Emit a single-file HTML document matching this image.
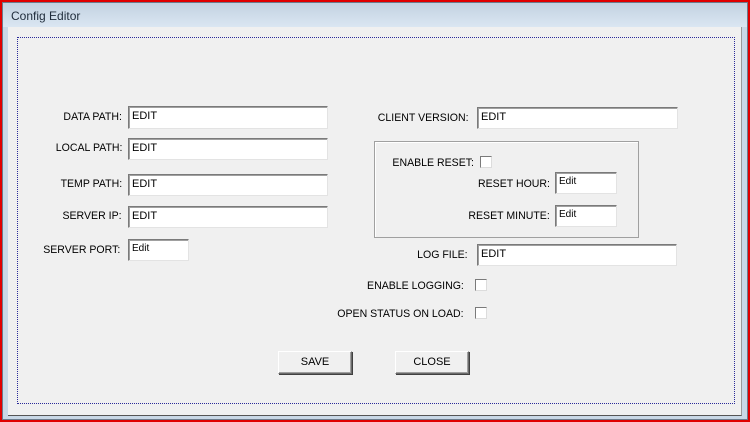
<!DOCTYPE html>
<html><head><meta charset="utf-8"><style>
*{margin:0;padding:0;box-sizing:border-box}
body{width:750px;height:422px;overflow:hidden;background:#e00000;font-family:"Liberation Sans",sans-serif;position:relative}
#win{position:absolute;left:2px;top:2px;width:746px;height:418px;background:#c9d8e6;border:1px solid #6b7b8c}
#title{position:absolute;left:3px;top:3px;width:744px;height:24px;background:linear-gradient(#c2d2e1,#dae6f2)}
#title span{position:absolute;left:8px;top:6px;font-size:12px;color:#1e2b3a}
#client{position:absolute;left:8px;top:27px;width:734px;height:389px;background:#f0f0f0;border-bottom:1px solid #555;border-right:1px solid #999}
#dots{position:absolute;left:17px;top:37px;width:718px;height:367px;border:1px dotted #2a2a9a}
.l{position:absolute;font-size:11px;color:#000;text-align:right;white-space:nowrap;transform-origin:right center;transform:scaleX(0.96)}
.e{position:absolute;background:#fff;border-top:1px solid #7a7a7a;border-left:1px solid #7a7a7a;border-right:1px solid #e3e3e3;border-bottom:1px solid #e3e3e3;box-shadow:inset 1px 1px 0 #a0a0a0;font-size:11px;padding:3px 0 0 3px;line-height:12px}
.c{position:absolute;width:12px;height:12px;background:#fff;border-top:1px solid #7a7a7a;border-left:1px solid #7a7a7a;border-right:1px solid #dcdcdc;border-bottom:1px solid #dcdcdc}
.b{position:absolute;height:23px;background:#f0f0f0;border:1px solid #6a6a6a;border-top-color:#fff;border-left-color:#fff;box-shadow:1px 1px 0 #404040,inset -1px -1px 0 #a0a0a0;font-size:11px;text-align:center;line-height:21px}
#grp{position:absolute;left:374px;top:141px;width:265px;height:97px;border:1px solid #a0a0a0;box-shadow:inset 1px 1px 0 #fff}
</style></head><body>
<div id="win"></div>
<div id="title"><span>Config Editor</span></div>
<div id="client"></div>
<div id="dots"></div>

<div class="l" style="right:628px;top:111px">DATA PATH:</div>
<div class="e" style="left:128px;top:106px;width:200px;height:23px">EDIT</div>
<div class="l" style="right:628px;top:142px">LOCAL PATH:</div>
<div class="e" style="left:128px;top:138px;width:200px;height:22px">EDIT</div>
<div class="l" style="right:628px;top:178px">TEMP PATH:</div>
<div class="e" style="left:128px;top:174px;width:200px;height:22px">EDIT</div>
<div class="l" style="right:628px;top:210px">SERVER IP:</div>
<div class="e" style="left:128px;top:206px;width:200px;height:22px">EDIT</div>
<div class="l" style="right:630px;top:244px">SERVER PORT:</div>
<div class="e" style="left:128px;top:239px;width:61px;height:22px;font-size:10px">Edit</div>

<div class="l" style="right:281px;top:112px">CLIENT VERSION:</div>
<div class="e" style="left:477px;top:107px;width:201px;height:22px">EDIT</div>
<div id="grp"></div>
<div class="l" style="right:276px;top:157px">ENABLE RESET:</div>
<div class="c" style="left:480px;top:156px"></div>
<div class="l" style="right:200px;top:178px">RESET HOUR:</div>
<div class="e" style="left:555px;top:172px;width:62px;height:22px;font-size:10px">Edit</div>
<div class="l" style="right:200px;top:210px">RESET MINUTE:</div>
<div class="e" style="left:555px;top:205px;width:62px;height:22px;font-size:10px">Edit</div>
<div class="l" style="right:282px;top:249px">LOG FILE:</div>
<div class="e" style="left:477px;top:244px;width:200px;height:22px">EDIT</div>
<div class="l" style="right:286px;top:280px">ENABLE LOGGING:</div>
<div class="c" style="left:475px;top:279px"></div>
<div class="l" style="right:286px;top:308px">OPEN STATUS ON LOAD:</div>
<div class="c" style="left:475px;top:307px"></div>

<div class="b" style="left:278px;top:351px;width:74px">SAVE</div>
<div class="b" style="left:395px;top:351px;width:74px">CLOSE</div>
</body></html>
